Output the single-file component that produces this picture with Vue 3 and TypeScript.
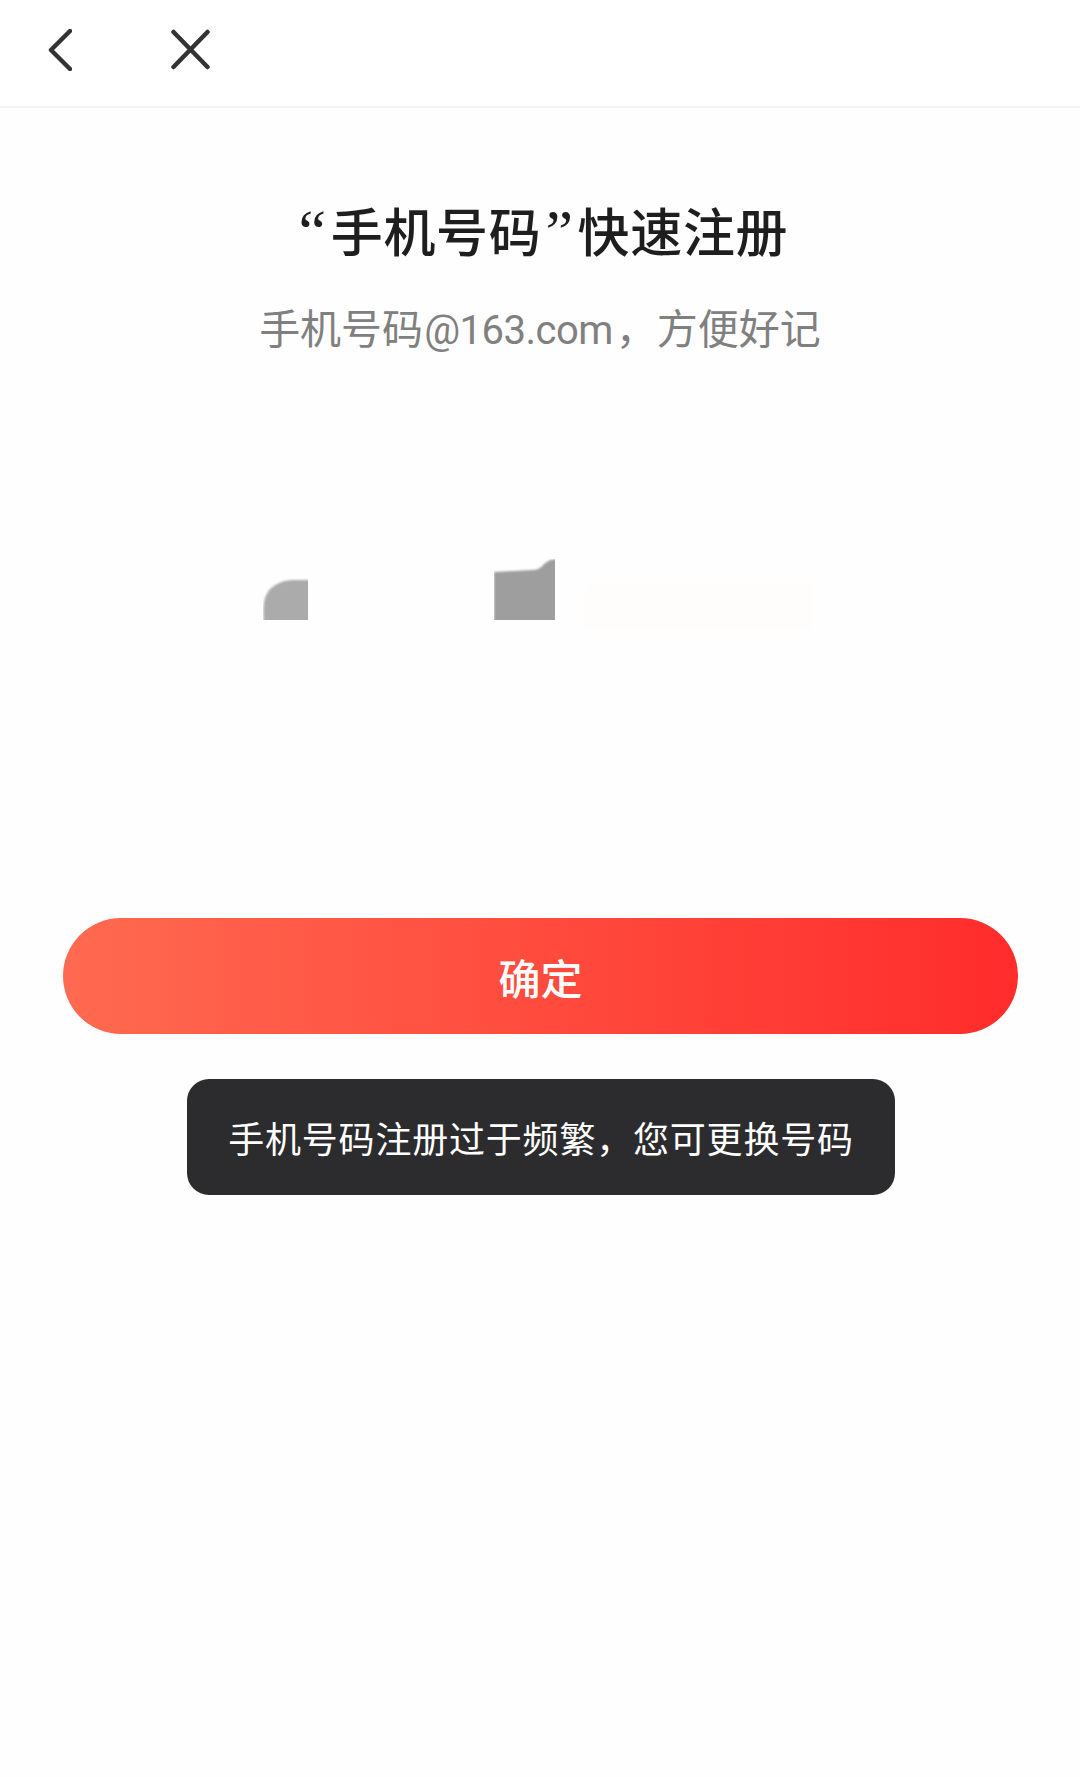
<script setup lang="ts">
const toast = '手机号码注册过于频繁，您可更换号码'
</script>

<template>
  <div class="page">
    <header class="nav">
      <svg class="icon back" viewBox="0 0 24 42" aria-label="返回">
        <path d="M22 2 L3 21 L22 40" />
      </svg>
      <svg class="icon close" viewBox="0 0 40 42" aria-label="关闭">
        <path d="M2.5 3 L36.5 38 M36.5 3 L2.5 38" />
      </svg>
    </header>

    <main class="content">
      <h1 class="title"><span class="quote">“</span>手机号码<span class="quote">”</span>快速注册</h1>
      <p class="subtitle">手机号码<span class="latin">@163.com</span>，方便好记</p>

      <div class="masked">
        <svg class="mask-left" viewBox="0 0 45 42">
          <defs><filter id="soft-l" x="-20%" y="-20%" width="140%" height="140%"><feGaussianBlur stdDeviation="1.2" /></filter></defs>
          <path filter="url(#soft-l)" d="M0.5 60 V30 Q1 5 28 2 L70 2 V60 Z" />
        </svg>
        <svg class="mask-right" viewBox="0 0 61 61">
          <defs><filter id="soft-r" x="-20%" y="-20%" width="140%" height="140%"><feGaussianBlur stdDeviation="1.2" /></filter></defs>
          <path filter="url(#soft-r)" d="M0 90 V13 L38 11 Q46 11 50 5 L56 1 L90 -4 V90 Z" />
        </svg>
        <div class="mask-strip"></div>
      </div>

      <button class="confirm" type="button">确定</button>
      <div class="toast">{{ toast }}</div>
    </main>
  </div>
</template>

<style scoped>
.page {
  width: 1080px;
  height: 1777px;
  background: #fefefe;
  font-family: "Noto Sans CJK SC", "Noto Sans", sans-serif;
  display: flex;
  flex-direction: column;
  overflow: hidden;
}
.nav {
  height: 77px;
  border-bottom: 2px solid #f3f3f3;
  background: #fff;
  display: flex;
  align-items: flex-start;
  padding: 29px 0 0 48px;
  gap: 99px;
}
.icon {
  height: 42px;
  fill: none;
  stroke: #333;
  stroke-width: 4.5;
  stroke-linecap: round;
  stroke-linejoin: round;
}
.back { width: 24px; }
.close { width: 40px; }
.content {
  display: flex;
  flex-direction: column;
  align-items: center;
}
.title {
  margin: 90px 0 0 3px;
  font-size: 52px;
  line-height: 64px;
  font-weight: 500;
  letter-spacing: 0.7px;
  color: #1e1e1e;
  white-space: nowrap;
}
.quote {
  display: inline-block;
  width: 36px;
  text-align: center;
  font-family: "Liberation Serif", serif;
  font-size: 62px;
  line-height: 1;
}
.subtitle {
  margin: 34px 0 0;
  font-size: 41px;
  line-height: 60px;
  color: #808080;
  white-space: nowrap;
}
.latin {
  font-family: Roboto, "Noto Sans", sans-serif;
  font-size: 40px;
  letter-spacing: -0.5px;
  margin: 0 3px 0 1px;
}
.masked {
  margin-top: 198px;
  width: 1080px;
  height: 70px;
  box-sizing: border-box;
  padding-left: 263px;
  display: flex;
  align-items: flex-start;
}
.mask-left {
  width: 45px;
  height: 42px;
  margin-top: 19px;
  fill: #ababab;
}
.mask-right {
  width: 61px;
  height: 61px;
  margin-left: 186px;
  fill: #9e9e9e;
}
.mask-strip {
  width: 229px;
  height: 45px;
  margin: 25px 0 0 30px;
  background: #fefdfb;
  border-radius: 6px;
}
.confirm {
  margin: 289px 0 0 1px;
  width: 955px;
  height: 116px;
  border: none;
  border-radius: 58px;
  background: linear-gradient(90deg, #ff6a50 0%, #ff2c2c 100%);
  color: #fff;
  font-family: inherit;
  font-size: 42px;
  font-weight: 500;
  padding: 0;
}
.toast {
  margin: 45px 0 0 2px;
  width: 708px;
  height: 116px;
  border-radius: 22px;
  background: #2c2c2e;
  color: #fff;
  font-size: 36px;
  letter-spacing: 0.8px;
  display: flex;
  align-items: center;
  justify-content: center;
  white-space: nowrap;
}
</style>
